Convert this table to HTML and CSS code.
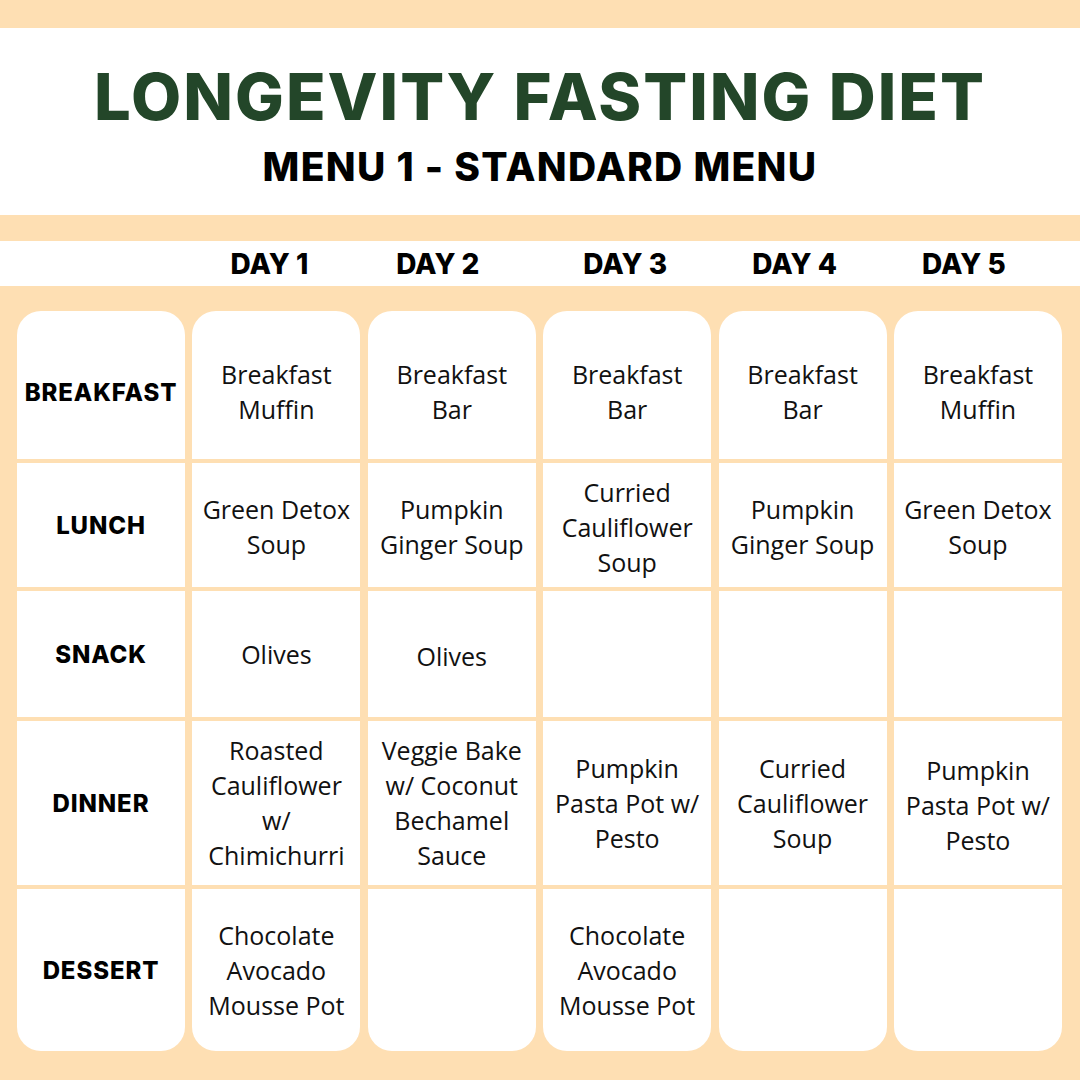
FILE: index.html
```html
<!DOCTYPE html>
<html lang="en">
<head>
<meta charset="utf-8">
<title>Longevity Fasting Diet</title>
<link rel="stylesheet" href="styles.css">
</head>
<body>
<div class="page">
  <header class="banner">
    <h1 class="title">LONGEVITY FASTING DIET</h1>
    <h2 class="subtitle">MENU 1 - STANDARD MENU</h2>
  </header>
  <div class="days">
    <div></div>
    <div class="day d1">DAY 1</div>
    <div class="day d2">DAY 2</div>
    <div class="day d3">DAY 3</div>
    <div class="day d4">DAY 4</div>
    <div class="day d5">DAY 5</div>
  </div>
  <div class="table">
    <div class="cell label top">BREAKFAST</div>
    <div class="cell top r1">Breakfast<br>Muffin</div>
    <div class="cell top r1">Breakfast<br>Bar</div>
    <div class="cell top r1">Breakfast<br>Bar</div>
    <div class="cell top r1">Breakfast<br>Bar</div>
    <div class="cell top r1">Breakfast<br>Muffin</div>

    <div class="cell label">LUNCH</div>
    <div class="cell r2">Green Detox<br>Soup</div>
    <div class="cell r2">Pumpkin<br>Ginger Soup</div>
    <div class="cell r2">Curried<br>Cauliflower<br>Soup</div>
    <div class="cell r2">Pumpkin<br>Ginger Soup</div>
    <div class="cell r2">Green Detox<br>Soup</div>

    <div class="cell label">SNACK</div>
    <div class="cell">Olives</div>
    <div class="cell r3">Olives</div>
    <div class="cell"></div>
    <div class="cell"></div>
    <div class="cell"></div>

    <div class="cell label">DINNER</div>
    <div class="cell">Roasted<br>Cauliflower<br>w/<br>Chimichurri</div>
    <div class="cell">Veggie Bake<br>w/ Coconut<br>Bechamel<br>Sauce</div>
    <div class="cell">Pumpkin<br>Pasta Pot w/<br>Pesto</div>
    <div class="cell">Curried<br>Cauliflower<br>Soup</div>
    <div class="cell r3">Pumpkin<br>Pasta Pot w/<br>Pesto</div>

    <div class="cell label bottom">DESSERT</div>
    <div class="cell bottom">Chocolate<br>Avocado<br>Mousse Pot</div>
    <div class="cell bottom"></div>
    <div class="cell bottom">Chocolate<br>Avocado<br>Mousse Pot</div>
    <div class="cell bottom"></div>
    <div class="cell bottom"></div>
  </div>
</div>
</body>
</html>
```

FILE: styles.css
```css
html, body {
  margin: 0;
  padding: 0;
}
body {
  background: #fedfb3;
  width: 1080px;
  height: 1080px;
  overflow: hidden;
}
.page {
  padding-top: 28px;
}
.banner {
  background: #ffffff;
  height: 187px;
  box-sizing: border-box;
  padding-top: 36px;
  display: flex;
  flex-direction: column;
  align-items: center;
  font-family: Inter, "Liberation Sans", sans-serif;
}
.title {
  margin: 0;
  font-size: 65px;
  line-height: 1;
  font-weight: 800;
  color: #234629;
  letter-spacing: 2px;
}
.subtitle {
  margin: 18px 0 0 0;
  font-size: 39px;
  line-height: 1;
  font-weight: 800;
  color: #000000;
  letter-spacing: 1.3px;
}
.days {
  margin-top: 26px;
  background: #ffffff;
  height: 45px;
  display: grid;
  grid-template-columns: repeat(6, 168px);
  column-gap: 7.4px;
  padding-left: 17px;
  align-items: center;
  font-family: Inter, "Liberation Sans", sans-serif;
}
.day {
  text-align: center;
  font-size: 28px;
  font-weight: 800;
  color: #000;
  letter-spacing: 0;
  line-height: 1;
}
.d1 { padding-right: 14px; }
.d2 { padding-right: 28px; }
.d3 { padding-right: 4px; }
.d4 { padding-right: 16px; }
.d5 { padding-right: 28px; }
.table {
  margin-top: 25px;
  display: grid;
  grid-template-columns: repeat(6, 168px);
  grid-template-rows: 148px 124px 126px 164px 162px;
  column-gap: 7.4px;
  row-gap: 4px;
  padding-left: 17px;
}
.cell {
  background: #ffffff;
  display: flex;
  align-items: center;
  justify-content: center;
  text-align: center;
  font-family: "Open Sans", "Liberation Sans", sans-serif;
  font-size: 25px;
  line-height: 35px;
  color: #111111;
}
.r1 {
  padding-top: 14px;
}
.r2 {
  padding-top: 4px;
}
.r3 {
  padding-top: 4px;
}
.label {
  font-family: Inter, "Liberation Sans", sans-serif;
  font-weight: 800;
  font-size: 24px;
  letter-spacing: 0.9px;
  color: #000;
}
.label.top {
  padding-top: 14px;
}
.top {
  border-top-left-radius: 24px;
  border-top-right-radius: 24px;
}
.bottom {
  border-bottom-left-radius: 24px;
  border-bottom-right-radius: 24px;
}
```
